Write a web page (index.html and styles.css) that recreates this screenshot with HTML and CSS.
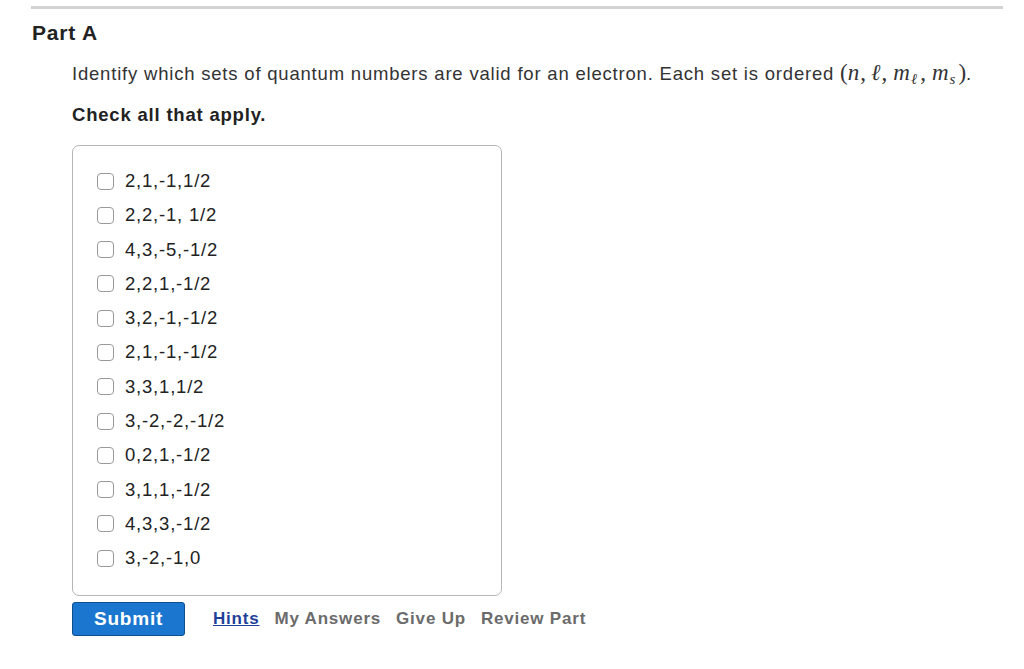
FILE: index.html
```html
<!DOCTYPE html>
<html>
<head>
<meta charset="utf-8">
<link rel="stylesheet" href="styles.css">
</head>
<body>
<div class="page">
  <hr class="rule">
  <h2 class="part-title">Part A</h2>
  <div class="content">
    <p class="prompt">Identify which sets of quantum numbers are valid for an electron. Each set is ordered <span class="math">(<i>n</i>,<i class="ell">ℓ</i>,<i>m</i><sub><i>ℓ</i></sub>,<i>m</i><sub><i>s</i></sub>)</span>.</p>
    <p class="instr">Check all that apply.</p>
    <div class="choices">
      <label class="choice"><span class="box"></span>2,1,-1,1/2</label>
      <label class="choice"><span class="box"></span>2,2,-1, 1/2</label>
      <label class="choice"><span class="box"></span>4,3,-5,-1/2</label>
      <label class="choice"><span class="box"></span>2,2,1,-1/2</label>
      <label class="choice"><span class="box"></span>3,2,-1,-1/2</label>
      <label class="choice"><span class="box"></span>2,1,-1,-1/2</label>
      <label class="choice"><span class="box"></span>3,3,1,1/2</label>
      <label class="choice"><span class="box"></span>3,-2,-2,-1/2</label>
      <label class="choice"><span class="box"></span>0,2,1,-1/2</label>
      <label class="choice"><span class="box"></span>3,1,1,-1/2</label>
      <label class="choice"><span class="box"></span>4,3,3,-1/2</label>
      <label class="choice"><span class="box"></span>3,-2,-1,0</label>
    </div>
    <div class="actions">
      <button class="submit">Submit</button>
      <a class="link hints" href="#">Hints</a>
      <a class="link" href="#">My Answers</a>
      <a class="link" href="#">Give Up</a>
      <a class="link" href="#">Review Part</a>
    </div>
  </div>
</div>
</body>
</html>
```
FILE: styles.css
```css
html, body {
  margin: 0;
  padding: 0;
  background: #fff;
}
body {
  font-family: "Liberation Sans", Arial, sans-serif;
  color: #222;
}
.page {
  padding: 6px 21px 0 31px;
}
.rule {
  margin: 0;
  border: 0;
  height: 3px;
  background: #d3d3d3;
}
.part-title {
  margin: 12px 0 0 1px;
  font-size: 21px;
  letter-spacing: 0.8px;
  font-weight: bold;
  line-height: 24px;
  color: #222;
}
.content {
  padding-left: 41px;
}
.prompt {
  margin: 17px 0 0 0;
  font-size: 18.5px;
  letter-spacing: 0.8px;
  line-height: 22px;
  color: #333;
}
.math {
  font-family: "Liberation Serif", "DejaVu Serif", serif;
  font-size: 23px;
  letter-spacing: 0;
}
.math i {
  font-style: italic;
  margin-right: 1px;
}
.math i.ell {
  margin-left: 5px;
}
.math sub {
  font-size: 15px;
  vertical-align: -4px;
  line-height: 0;
  margin-right: 2px;
}
.math > i:nth-of-type(3),
.math > i:nth-of-type(4) {
  margin-left: 6px;
}
.instr {
  margin: 19px 0 0 0;
  font-size: 18.5px;
  letter-spacing: 0.8px;
  font-weight: bold;
  line-height: 22px;
  color: #222;
}
.choices {
  margin-top: 19px;
  width: 430px;
  height: 451px;
  box-sizing: border-box;
  border: 1px solid #b5b5b5;
  border-radius: 7px;
  padding: 24px 0 0 24px;
  display: flex;
  flex-direction: column;
  gap: 12.3px;
}
.choice {
  display: flex;
  align-items: center;
  height: 22px;
  font-size: 18.5px;
  letter-spacing: 0.8px;
  color: #222;
}
.box {
  width: 15px;
  height: 15px;
  border: 1px solid #999;
  border-radius: 4px;
  margin-right: 11px;
  background: #fff;
  flex: none;
}
.actions {
  margin-top: 6px;
  display: flex;
  align-items: center;
}
.submit {
  width: 113px;
  height: 34px;
  box-sizing: border-box;
  background: #1a76cf;
  border: 1px solid #0f4f8e;
  border-radius: 3px;
  color: #fff;
  font-family: "Liberation Sans", Arial, sans-serif;
  font-weight: bold;
  font-size: 19px;
  letter-spacing: 0.8px;
  padding: 0;
  margin-right: 28px;
}
.link {
  font-size: 17px;
  letter-spacing: 0.8px;
  font-weight: bold;
  color: #6b6b6b;
  text-decoration: none;
  margin-right: 15px;
}
.link.hints {
  color: #1f3f9a;
  text-decoration: underline;
}
```
